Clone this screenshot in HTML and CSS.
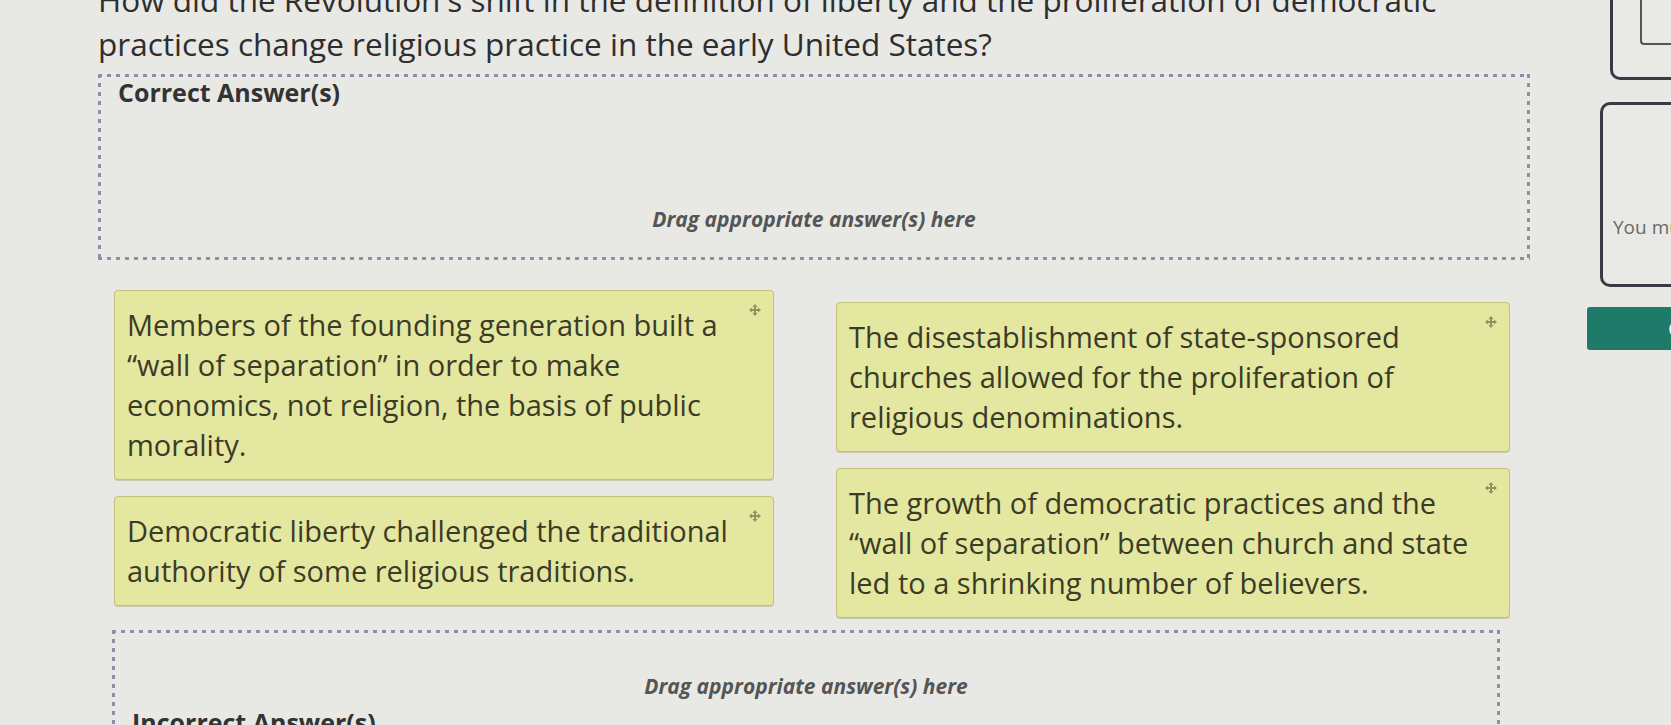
FILE: index.html
```html
<!DOCTYPE html>
<html lang="en">
<head>
<meta charset="utf-8">
<title>Drag and drop question</title>
<link rel="stylesheet" href="styles.css">
</head>
<body>
<div class="page">
  <main class="quiz">
    <h1 class="question">How did the Revolution's shift in the definition of liberty and the proliferation of democratic<br>practices change religious practice in the early United States?</h1>

    <section class="zone zone-correct">
      <h2 class="zone-label">Correct Answer(s)</h2>
      <p class="drop-hint">Drag appropriate answer(s) here</p>
    </section>

    <div class="choices">
      <div class="choice-col col-left">
        <div class="card card-1">Members of the founding generation built a “wall of separation” in order to make economics, not religion, the basis of public morality.<svg class="move" viewBox="0 0 12 12"><path d="M6 0L8.6 3H7V5H9V3.4L12 6L9 8.6V7H7V9H8.6L6 12L3.4 9H5V7H3V8.6L0 6L3 3.4V5H5V3H3.4Z"/></svg></div>
        <div class="card card-3">Democratic liberty challenged the traditional authority of some religious traditions.<svg class="move" viewBox="0 0 12 12"><path d="M6 0L8.6 3H7V5H9V3.4L12 6L9 8.6V7H7V9H8.6L6 12L3.4 9H5V7H3V8.6L0 6L3 3.4V5H5V3H3.4Z"/></svg></div>
      </div>
      <div class="choice-col col-right">
        <div class="card card-2">The disestablishment of state-sponsored churches allowed for the proliferation of religious denominations.<svg class="move" viewBox="0 0 12 12"><path d="M6 0L8.6 3H7V5H9V3.4L12 6L9 8.6V7H7V9H8.6L6 12L3.4 9H5V7H3V8.6L0 6L3 3.4V5H5V3H3.4Z"/></svg></div>
        <div class="card card-4">The growth of democratic practices and the “wall of separation” between church and state led to a shrinking number of believers.<svg class="move" viewBox="0 0 12 12"><path d="M6 0L8.6 3H7V5H9V3.4L12 6L9 8.6V7H7V9H8.6L6 12L3.4 9H5V7H3V8.6L0 6L3 3.4V5H5V3H3.4Z"/></svg></div>
      </div>
    </div>

    <section class="zone zone-incorrect">
      <p class="drop-hint">Drag appropriate answer(s) here</p>
      <h2 class="zone-label">Incorrect Answer(s)</h2>
    </section>
  </main>

  <aside class="side">
    <div class="side-box side-top"><div class="side-inner"></div></div>
    <div class="side-box side-msg"><p>You must make a selection to check your answer.</p></div>
    <button class="check-btn">Check Answer</button>
  </aside>
</div>
</body>
</html>
```

FILE: styles.css
```css
html, body {
  margin: 0;
  padding: 0;
}

body {
  width: 1671px;
  height: 725px;
  overflow: hidden;
  background: #e8e8e5;
  font-family: "Open Sans", "Noto Sans", sans-serif;
  color: #2f2f2f;
}

.page {
  display: flex;
  align-items: flex-start;
}

.quiz {
  flex: 0 0 1432px;
  margin-left: 98px;
}

.question {
  margin: -22px 0 0;
  font-size: 31.5px;
  line-height: 44px;
  font-weight: 400;
  color: #2e2e2e;
  white-space: nowrap;
}

.zone {
  --dot: #8b8fa7;
  box-sizing: border-box;
  display: flex;
  flex-direction: column;
  background:
    repeating-linear-gradient(90deg, var(--dot) 0 4px, transparent 4px 9px) left top / 100% 3px no-repeat,
    repeating-linear-gradient(90deg, var(--dot) 0 4px, transparent 4px 9px) left bottom / 100% 3px no-repeat,
    repeating-linear-gradient(180deg, var(--dot) 0 4px, transparent 4px 9px) left top / 3px 100% no-repeat,
    repeating-linear-gradient(180deg, var(--dot) 0 4px, transparent 4px 9px) right top / 3px 100% no-repeat;
}

.zone-label {
  margin: 0;
  font-size: 25px;
  line-height: 32px;
  font-weight: 700;
  color: #333;
}

.drop-hint {
  margin: 0;
  text-align: center;
  font-size: 21px;
  line-height: 28px;
  font-weight: 700;
  font-style: italic;
  color: #555;
}

.zone-correct {
  margin-top: 8px;
  height: 186px;
  padding: 2px 20px 0;
}

.zone-correct .drop-hint {
  margin-top: 97px;
}

.choices {
  display: grid;
  grid-template-columns: 660px 674px;
  column-gap: 62px;
  margin: 30px 0 0 16px;
  align-items: start;
}

.choice-col {
  display: flex;
  flex-direction: column;
  gap: 16px;
}

.col-right {
  margin-top: 12px;
}

.card {
  position: relative;
  box-sizing: border-box;
  padding: 14px 34px 14px 12px;
  background: #e4e7a0;
  border: 1.5px solid #c3c07a;
  border-radius: 4px;
  box-shadow: 0 1px 0 rgba(150, 146, 80, 0.35);
  font-size: 29px;
  line-height: 40px;
  color: #3b3b27;
}

.col-right .card {
  padding-right: 18px;
}

.move {
  position: absolute;
  top: 13px;
  right: 12px;
  width: 12px;
  height: 12px;
  fill: #939160;
}

.zone-incorrect {
  margin: 12px 30px 0 14px;
  height: 140px;
  padding: 42px 20px 0;
}

.zone-incorrect .zone-label {
  margin-top: 6px;
}

.side {
  flex: 0 0 300px;
  margin-left: 57px;
  display: flex;
  flex-direction: column;
  align-items: flex-start;
}

.side-box {
  box-sizing: border-box;
  border: 3px solid #3b3a44;
  border-radius: 10px;
  background: #e9e9e6;
}

.side-top {
  width: 200px;
  height: 120px;
  margin: -40px 0 0 23px;
  padding: 0 0 0 27px;
}

.side-inner {
  height: 80px;
  border-left: 2px solid #55545c;
  border-bottom: 2px solid #55545c;
  border-radius: 0 0 0 4px;
}

.side-msg {
  width: 220px;
  height: 185px;
  margin: 22px 0 0 13px;
  padding: 0 0 0 10px;
  display: flex;
  align-items: center;
}

.side-msg p {
  margin: 64px 0 0;
  white-space: nowrap;
  font-size: 19px;
  color: #6a6a6a;
}

.check-btn {
  margin-top: 20px;
  width: 296px;
  height: 43px;
  border: 0;
  border-radius: 3px;
  background: #1f7a6a;
  color: #fff;
  font-family: "Open Sans", sans-serif;
  font-size: 19px;
  font-weight: 700;
  text-align: center;
}
```
